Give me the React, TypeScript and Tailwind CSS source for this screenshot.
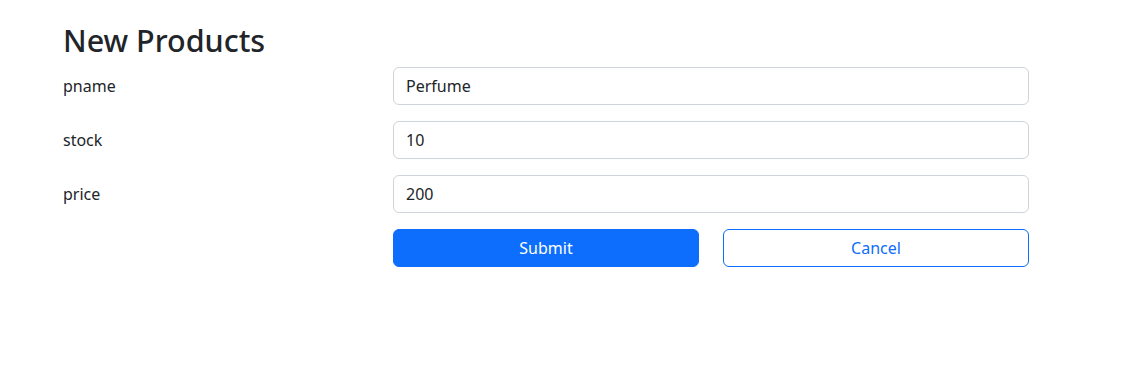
import { useState } from "react";

const font = { fontFamily: '"Segoe UI", "Noto Sans", "Liberation Sans", sans-serif' };

function Field({
  label,
  value,
  onChange,
}: {
  label: string;
  value: string;
  onChange: (v: string) => void;
}) {
  return (
    <div className="mb-4 flex">
      <label className="w-[330px] shrink-0 px-3 pt-[7px] pb-[7px] text-base leading-6">
        {label}
      </label>
      <div className="flex-1 px-3">
        <input
          className="block h-[38px] w-full rounded-[6px] border border-[#ced4da] bg-white px-3 text-base leading-6 text-[#212529] outline-none"
          value={value}
          onChange={(e) => onChange(e.target.value)}
        />
      </div>
    </div>
  );
}

export default function App() {
  const [pname, setPname] = useState("Perfume");
  const [stock, setStock] = useState("10");
  const [price, setPrice] = useState("200");

  return (
    <div className="min-h-[384px] bg-white text-[#212529]" style={font}>
      <div className="w-[990px] ml-[51px] pt-[21px]">
        <h2 className="mb-2 px-3 text-[30.5px] font-medium leading-[38px]">New Products</h2>
        <form onSubmit={(e) => e.preventDefault()}>
          <Field label="pname" value={pname} onChange={setPname} />
          <Field label="stock" value={stock} onChange={setStock} />
          <Field label="price" value={price} onChange={setPrice} />
          <div className="flex">
            <div className="w-[330px] shrink-0" />
            <div className="flex flex-1">
              <div className="w-1/2 px-3">
                <button
                  type="submit"
                  className="h-[38px] w-full rounded-[6px] border border-[#0d6efd] bg-[#0d6efd] text-base text-white"
                >
                  Submit
                </button>
              </div>
              <div className="w-1/2 px-3">
                <button
                  type="button"
                  className="h-[38px] w-full rounded-[6px] border border-[#0d6efd] bg-white text-base text-[#0d6efd]"
                >
                  Cancel
                </button>
              </div>
            </div>
          </div>
        </form>
      </div>
    </div>
  );
}
